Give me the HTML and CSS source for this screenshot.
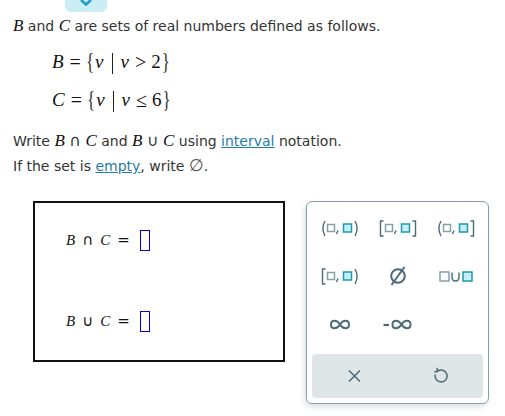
FILE: index.html
```html
<!DOCTYPE html>
<html>
<head>
<meta charset="utf-8">
<link rel="stylesheet" href="styles.css">
</head>
<body>
<div class="tab"><svg width="12" height="6" viewBox="0 0 12 6"><path d="M1 0 L6 4.5 L11 0" fill="none" stroke="#1b9dc8" stroke-width="2.6"/></svg></div>
<p class="intro"><i class="m">B</i> and <i class="m">C</i> are sets of real numbers defined as follows.</p>
<div class="defs">
  <div class="def"><i>B</i><span class="op">=</span><span class="br">{</span><i>v</i><span class="bar"></span><i>v</i><span class="op2">&gt;</span>2<span class="br">}</span></div>
  <div class="def"><i>C</i><span class="op">=</span><span class="br">{</span><i>v</i><span class="bar"></span><i>v</i><span class="op2">≤</span>6<span class="br">}</span></div>
</div>
<p class="instr">Write <i class="m">B</i> <span class="so">∩</span> <i class="m">C</i> and <i class="m">B</i> <span class="so">∪</span> <i class="m">C</i> using <a class="link">interval</a> notation.<br>If the set is <a class="link">empty</a>, write <span class="empty">∅</span>.</p>
<div class="work">
  <div class="answers">
    <div class="eq"><i>B</i><span class="eo">∩</span><i>C</i><span class="eo">=</span><span class="blank"></span></div>
    <div class="eq"><i>B</i><span class="eo">∪</span><i>C</i><span class="eo">=</span><span class="blank"></span></div>
  </div>
  <div class="keypad">
    <div class="keys">
      <div class="key"><svg width="40" height="17" viewBox="0 0 40 17"><path class="p" d="M5 1 Q0.8 8.5 5 16"/><rect class="s1" x="7.5" y="4.5" width="7" height="7"/><path class="p" d="M18 10.5 L16.5 14"/><rect class="s2" x="23.5" y="4" width="8" height="8"/><path class="p" d="M35 1 Q39.2 8.5 35 16"/></svg></div>
      <div class="key"><svg width="40" height="17" viewBox="0 0 40 17"><path class="p" d="M5.5 1 H2.5 V16 H5.5"/><rect class="s1" x="7.5" y="4.5" width="7" height="7"/><path class="p" d="M18 10.5 L16.5 14"/><rect class="s2" x="23.5" y="4" width="8" height="8"/><path class="p" d="M34.5 1 H37.5 V16 H34.5"/></svg></div>
      <div class="key"><svg width="40" height="17" viewBox="0 0 40 17"><path class="p" d="M5 1 Q0.8 8.5 5 16"/><rect class="s1" x="7.5" y="4.5" width="7" height="7"/><path class="p" d="M18 10.5 L16.5 14"/><rect class="s2" x="23.5" y="4" width="8" height="8"/><path class="p" d="M34.5 1 H37.5 V16 H34.5"/></svg></div>
      <div class="key"><svg width="40" height="17" viewBox="0 0 40 17"><path class="p" d="M5.5 1 H2.5 V16 H5.5"/><rect class="s1" x="7.5" y="4.5" width="7" height="7"/><path class="p" d="M18 10.5 L16.5 14"/><rect class="s2" x="23.5" y="4" width="8" height="8"/><path class="p" d="M35 1 Q39.2 8.5 35 16"/></svg></div>
      <div class="key"><svg width="20" height="22" viewBox="0 0 20 22"><circle cx="10" cy="11" r="6.8" fill="none" stroke="#4d6b77" stroke-width="2"/><path d="M16.5 2 L3.5 20" stroke="#4d6b77" stroke-width="2"/></svg></div>
      <div class="key"><svg width="35" height="11" viewBox="0 0 35 11"><rect class="s1" x="1" y="1" width="9" height="9"/><path class="p" d="M13 1.5 V6 Q13 10 16.5 10 Q20 10 20 6 V1.5"/><rect class="s2" x="24" y="1" width="9" height="9"/></svg></div>
      <div class="key"><svg width="22" height="13" viewBox="0 0 22 13"><path class="inf" d="M11 6.5 C8 1.5 2 1.5 2 6.5 C2 11.5 8 11.5 11 6.5 C14 1.5 20 1.5 20 6.5 C20 11.5 14 11.5 11 6.5Z"/></svg></div>
      <div class="key"><svg width="30" height="13" viewBox="0 0 30 13"><path d="M0.5 7 H6" stroke="#4d6b77" stroke-width="2.2"/><path class="inf" d="M18.5 6.5 C15.5 1.5 9.5 1.5 9.5 6.5 C9.5 11.5 15.5 11.5 18.5 6.5 C21.5 1.5 27.5 1.5 27.5 6.5 C27.5 11.5 21.5 11.5 18.5 6.5Z"/></svg></div>
      <div class="key"></div>
    </div>
    <div class="actions">
      <div class="act"><svg width="13" height="12" viewBox="0 0 13 12"><path d="M1 0.5 L12 11.5 M12 0.5 L1 11.5" stroke="#4d6b77" stroke-width="1.5"/></svg></div>
      <div class="act"><svg width="15" height="18" viewBox="0 0 15 18"><path d="M4.5 4.2 A6 6 0 1 1 2.3 7.5" fill="none" stroke="#4d6b77" stroke-width="1.5"/><path d="M4 1 L4.6 4.3 L1.3 4.9" fill="none" stroke="#4d6b77" stroke-width="1.5"/></svg></div>
    </div>
  </div>
</div>
</body>
</html>
```
FILE: styles.css
```css
html, body { margin: 0; padding: 0; background: #fff; }
body {
  font-family: "DejaVu Sans", Verdana, sans-serif;
  font-size: 14px;
  color: #333;
  width: 505px;
  height: 416px;
  overflow: hidden;
}
.tab {
  margin-left: 65px;
  width: 42px;
  height: 12px;
  background: #cbeef4;
  border-radius: 0 0 6px 6px;
  display: flex;
  justify-content: center;
  align-items: flex-start;
}
.tab svg { display: block; }
.m {
  font-family: "Liberation Serif", serif;
  font-size: 17px;
  font-style: italic;
  color: #111;
}
.so { font-size: 16px; }
.intro {
  margin: 4px 0 0 13px;
  line-height: 20px;
}
.defs {
  margin: 0 0 0 52px;
  font-family: "Liberation Serif", serif;
  font-size: 19px;
  color: #111;
}
.def {
  height: 38px;
  display: flex;
  align-items: center;
}
.def:first-child { margin-top: 7px; }
.def i { font-style: italic; }
.def .op { margin: 0 4px 0 6px; font-size: 20px; }
.def .op2 { margin: 0 5px 0 6px; font-size: 20px; }
.def .br {
  font-size: 17px;
  font-weight: 300;
  transform: scaleY(1.35);
  color: #333;
  margin: 0 1px;
}
.def .bar {
  width: 1px;
  height: 21px;
  background: #222;
  margin: 2px 8px 0 8px;
}
.instr {
  margin: 10px 0 0 13px;
  line-height: 24px;
}
.link { color: #1f7ea1; text-decoration: underline; }
.empty { font-size: 17px; color: #555; }
.work {
  margin-top: 23px;
  display: flex;
  align-items: flex-start;
}
.answers {
  margin-left: 33px;
  width: 252px;
  height: 161px;
  border: 2px solid #111;
  padding: 26px 0 0 31px;
  box-sizing: border-box;
  display: flex;
  flex-direction: column;
  gap: 59px;
}
.eq {
  display: flex;
  align-items: center;
  gap: 7px;
  font-family: "Liberation Serif", serif;
  font-size: 15px;
  color: #111;
  height: 22px;
}
.eq .eo { font-family: "DejaVu Sans", sans-serif; font-size: 15px; }
.eq i { font-style: italic; }
.blank {
  width: 8px;
  height: 19px;
  border: 1.5px solid #0000ee;
  margin-left: 3px;
}
.keypad {
  margin-left: 21px;
  width: 183px;
  height: 203px;
  box-sizing: border-box;
  border: 1px solid #85a0a9;
  border-radius: 6px;
  padding: 2px 4px 4px 4px;
  box-shadow: -2px 3px 5px rgba(120,140,150,0.25);
  display: flex;
  flex-direction: column;
}
.keys {
  display: grid;
  grid-template-columns: repeat(3, 58px);
  grid-template-rows: repeat(3, 48px);
}
.key {
  display: flex;
  align-items: center;
  justify-content: center;
}
.key svg { display: block; }
.p { fill: none; stroke: #4d6b77; stroke-width: 1.4; }
.s1 { fill: #fff; stroke: #8aa0a8; stroke-width: 1.5; }
.s2 { fill: #c6eef3; stroke: #1a9ab3; stroke-width: 1.5; }
.inf { fill: none; stroke: #4d6b77; stroke-width: 2; }
.actions {
  margin: 6px 1px 0 1px;
  height: 44px;
  background: #dfe6e8;
  border-radius: 4px;
  display: grid;
  grid-template-columns: 1fr 1fr;
}
.act {
  display: flex;
  align-items: center;
  justify-content: center;
}
```
